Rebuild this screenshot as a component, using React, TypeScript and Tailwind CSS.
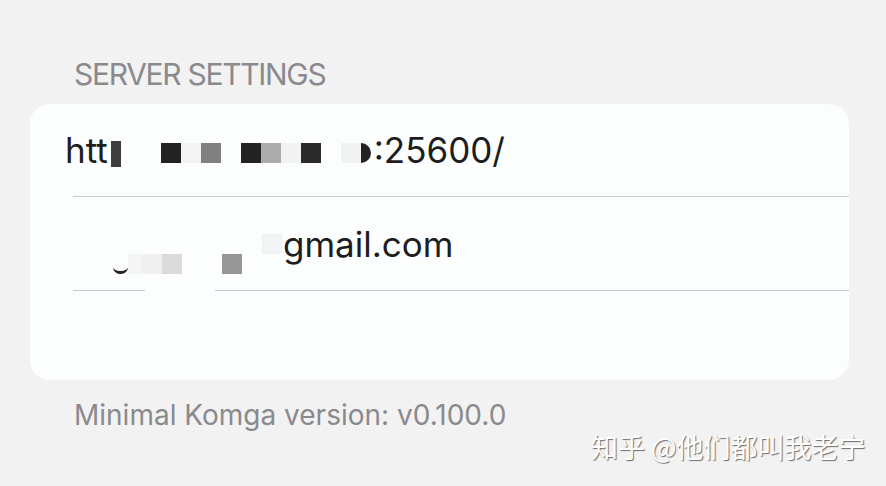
export default function App() {
  return (
    <div className="relative h-[486px] w-[886px] overflow-hidden bg-[#f2f2f2] font-['Inter','Noto_Sans',sans-serif]">
      <div className="pl-[74px] pt-[56px] text-[30px] leading-[36px] tracking-[-1.3px] text-[#8a8a8e]">SERVER SETTINGS</div>

      <div className="ml-[30px] mt-[12px] w-[819px] overflow-hidden rounded-[20px] bg-[#fcfdfd]">
        {/* server url */}
        <div className="flex h-[92px] items-center pl-[35px] text-[35px] leading-[42px] text-[#1d1d1f]">
          <span>htt</span>
          <span className="ml-[3px] inline-block h-[26px] w-[10px] translate-y-[4px] bg-[#3d3d3d]" />
          <div className="flex translate-y-[3px] self-center">
            <span className="ml-[40px] h-[20px] w-[20px] bg-[#222222]" />
            <span className="h-[20px] w-[20px] bg-[#f2f3f4]" />
            <span className="h-[20px] w-[20px] bg-[#808080]" />
            <span className="ml-[20px] h-[20px] w-[20px] bg-[#222222]" />
            <span className="h-[20px] w-[20px] bg-[#ababab]" />
            <span className="h-[20px] w-[20px] bg-[#f1f2f3]" />
            <span className="h-[20px] w-[20px] bg-[#2b2b2b]" />
            <span className="ml-[20px] h-[20px] w-[20px] bg-[#f1f2f3]" />
            <span className="h-[20px] w-[10px] rounded-r-full bg-[#222222]" />
          </div>
          <span className="ml-[3px]">:25600/</span>
        </div>
        <div className="ml-[43px] h-px bg-[#c8ccd0]" />

        {/* username */}
        <div className="flex h-[93px] items-center pl-[83px] text-[35px] leading-[42px] text-[#1d1d1f]">
          <div className="flex translate-y-[10px] items-end">
            <span className="h-[7px] w-[15px] rounded-b-full border-b-[3px] border-[#222222]" />
            <span className="h-[20px] w-[14px] bg-[#f4f5f5]" />
            <span className="h-[20px] w-[20px] bg-[#efefef]" />
            <span className="h-[20px] w-[20px] bg-[#dadada]" />
            <span className="ml-[40px] h-[20px] w-[20px] bg-[#979797]" />
            <span className="mb-[20px] ml-[20px] h-[20px] w-[20px] bg-[#f2f3f4]" />
          </div>
          <span className="ml-px">gmail.com</span>
        </div>
        <div className="ml-[43px] flex h-px">
          <div className="w-[72px] bg-[#c8ccd0]" />
          <div className="ml-[70px] flex-1 bg-[#c8ccd0]" />
        </div>

        {/* password */}
        <div className="h-[89px]" />
      </div>

      <div className="mt-[18px] pl-[74px] text-[28px] leading-[34px] text-[#8a8a8e]">Minimal Komga version: v0.100.0</div>

      <div className="absolute left-[591px] top-[433px] font-['Noto_Sans_CJK_SC',sans-serif] text-[27px] leading-[27px] text-white [text-shadow:1px_1px_1px_rgba(0,0,0,0.55)]">
        知乎 @他们都叫我老宁
      </div>
    </div>
  )
}
